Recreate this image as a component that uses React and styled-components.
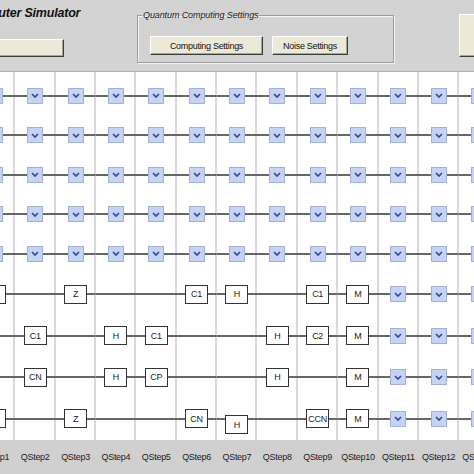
import styled, { createGlobalStyle } from "styled-components";

const COL = 40.35;
const STEPS = 13;

const GlobalStyle = createGlobalStyle`
  body {
    margin: 0;
    background: #d3d3d3;
    font-family: "Liberation Sans", Arial, sans-serif;
  }
`;

// S = step dropdown, "" = wire only, anything else is a gate label
const S = "sel";
const selRow = Array(STEPS).fill(S);
const circuito = [
  selRow,
  selRow,
  selRow,
  selRow,
  selRow,
  ["H", "", "Z", "", "", "C1", "H", "", "C1", "M", S, S, S],
  ["", "C1", "", "H", "C1", "", "", "H", "C2", "M", S, S, S],
  ["", "CN", "", "H", "CP", "", "", "H", "", "M", S, S, S],
  ["Z", "", "Z", "", "", "CN", "H*", "", "CCN", "M", S, S, S],
];

const Ventana = styled.div`
  width: 474px;
  height: 474px;
  overflow: hidden;
  background: #d3d3d3;
`;

const Cabecera = styled.header`
  height: 72px;
  box-sizing: border-box;
  border-bottom: 1px solid #b2b2b2;
  display: flex;
  align-items: flex-start;
  margin-left: -100px;
  padding-left: 7px;

  & > * {
    flex-shrink: 0;
  }
`;

const BloqueIzq = styled.div`
  display: flex;
  flex-direction: column;
  width: 157px;
`;

const Titulo = styled.h1`
  margin: 5px 0 0 0;
  font-size: 12.5px;
  line-height: 16px;
  font-weight: bold;
  font-style: italic;
  letter-spacing: -0.2px;
  color: #111;
  white-space: nowrap;
`;

const Boton = styled.button`
  box-sizing: border-box;
  flex-shrink: 0;
  width: ${({ $w }) => $w}px;
  height: ${({ $h }) => $h || 19}px;
  margin: 0;
  padding: 0;
  background: #ece9d8;
  border-top: 1px solid #ffffff;
  border-left: 1px solid #ffffff;
  border-right: 1px solid #3c3c3c;
  border-bottom: 1px solid #3c3c3c;
  box-shadow: inset -1px -1px 0 #a8a595;
  font-family: "Liberation Sans", Arial, sans-serif;
  font-size: 9px;
  letter-spacing: -0.3px;
  color: #111;
  white-space: nowrap;
`;

const BotonIzq = styled(Boton)`
  margin: 18px 0 0 3px;
`;

const Grupo = styled.fieldset`
  box-sizing: border-box;
  width: 257px;
  height: 53px;
  margin: 10px 0 0 73px;
  padding: 15px 0 0 12px;
  border: 1px solid #9c9c9c;
  box-shadow: inset 1px 1px 0 #f4f4f4, 1px 1px 0 #f4f4f4;
  display: flex;
  align-items: flex-start;
  gap: 9px;
`;

const Leyenda = styled.legend`
  margin-left: -8px;
  padding: 0 1px;
  font-size: 9px;
  line-height: 11px;
  font-style: italic;
  letter-spacing: -0.1px;
  color: #222;
`;

const BotonDer = styled(Boton)`
  margin: 14px 0 0 65px;
`;

const Circuito = styled.div`
  display: grid;
  grid-template-columns: repeat(${STEPS}, ${COL}px);
  grid-template-rows: repeat(5, 39.5px) repeat(4, 41.5px);
  margin-left: -${COL - 15}px;
  padding-top: 4px;
  height: 368px;
  box-sizing: border-box;
  background-color: #fff;
  background-image: repeating-linear-gradient(
    to right,
    transparent 0 ${COL - 2}px,
    #d9d9d9 ${COL - 2}px ${COL}px
  );
`;

const Celda = styled.div`
  display: flex;
  align-items: center;
  justify-content: center;
  background: linear-gradient(#666, #666) center / 100% 2px no-repeat;
`;

const Desplegable = styled.div`
  box-sizing: border-box;
  width: 16px;
  height: 16px;
  display: flex;
  align-items: center;
  justify-content: center;
  background: #c4d3f6;
  border: 1px solid #a2b1d3;
`;

const Puerta = styled.div`
  box-sizing: border-box;
  width: 23px;
  height: 19px;
  display: flex;
  align-items: center;
  justify-content: center;
  background: #fff;
  border: 1px solid #333;
  font-size: 9px;
  letter-spacing: -0.3px;
  color: #222;
  transform: translateY(${({ $bajar }) => ($bajar ? 6 : 0)}px);
`;

const Etiquetas = styled.div`
  display: grid;
  grid-template-columns: repeat(${STEPS}, ${COL}px);
  margin-left: -${COL - 15}px;
  height: 34px;
  align-items: center;
  background: #d0d0d0;
`;

const Etiqueta = styled.span`
  text-align: center;
  font-size: 9px;
  letter-spacing: -0.3px;
  color: #222;
  white-space: nowrap;
`;

const Flecha = () => (
  <svg width="8" height="5" viewBox="0 0 8 5">
    <path d="M1 1 L4 4 L7 1" fill="none" stroke="#3a4a86" strokeWidth="1.7" />
  </svg>
);

const Paso = ({ valor }) => {
  if (valor === S) {
    return (
      <Celda>
        <Desplegable>
          <Flecha />
        </Desplegable>
      </Celda>
    );
  }
  if (!valor) return <Celda />;
  const bajar = valor.endsWith("*");
  return (
    <Celda>
      <Puerta $bajar={bajar}>{valor.replace("*", "")}</Puerta>
    </Celda>
  );
};

const App = () => (
  <Ventana>
    <GlobalStyle />
    <Cabecera>
      <BloqueIzq>
        <Titulo>Quantum Computer Simulator</Titulo>
        <BotonIzq $w={154} $h={18}>Run</BotonIzq>
      </BloqueIzq>
      <Grupo>
        <Leyenda>Quantum Computing Settings</Leyenda>
        <Boton $w={113}>Computing Settings</Boton>
        <Boton $w={76}>Noise Settings</Boton>
      </Grupo>
      <BotonDer $w={100} $h={43}>Results</BotonDer>
    </Cabecera>

    <Circuito>
      {circuito.map((fila, r) =>
        fila.map((v, c) => <Paso key={`${r}-${c}`} valor={v} />)
      )}
    </Circuito>

    <Etiquetas>
      {Array.from({ length: STEPS }, (_, i) => (
        <Etiqueta key={i}>QStep{i + 1}</Etiqueta>
      ))}
    </Etiquetas>
  </Ventana>
);

export default App;
